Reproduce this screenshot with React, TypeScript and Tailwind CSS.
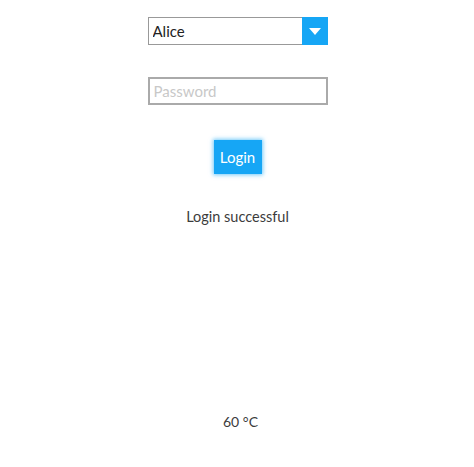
import { useState } from "react"

export default function App() {
  const [user, setUser] = useState("Alice")

  return (
    <div className="w-[474px] h-[467px] bg-white flex flex-col items-center font-['Lato',sans-serif] text-[#3c3c3c]">
      <div className="mt-[17px] ml-[1px] relative w-[180px] h-[28px] border border-[#999] bg-white">
        <select
          value={user}
          onChange={(e) => setUser(e.target.value)}
          className="appearance-none w-full h-full pl-[4px] pr-[28px] text-[15px] text-[#222] bg-transparent outline-none"
        >
          <option>Alice</option>
          <option>Bob</option>
        </select>
        <div className="absolute top-[-1px] right-[-1px] w-[26px] h-[28px] bg-[#16a6f5] flex items-center justify-center pointer-events-none">
          <svg width="12" height="7" viewBox="0 0 12 7">
            <path d="M0 0 L12 0 L6 7 Z" fill="white" />
          </svg>
        </div>
      </div>

      <input
        type="password"
        placeholder="Password"
        className="mt-[32px] ml-[1px] w-[180px] h-[28px] border-2 border-[#aaa] px-[4px] text-[15px] outline-none placeholder:text-[#c8c8c8]"
      />

      <button className="mt-[35px] ml-[1px] w-[48px] h-[34px] bg-[#16a6f5] text-white text-[15px] shadow-[0_0_4px_1px_rgba(22,166,245,0.6)]">
        Login
      </button>

      <p className="mt-[32px] ml-[1px] text-[14.5px]">Login successful</p>

      <p className="mt-[183px] pl-[7px] text-[14px]">60 °C</p>
    </div>
  )
}
